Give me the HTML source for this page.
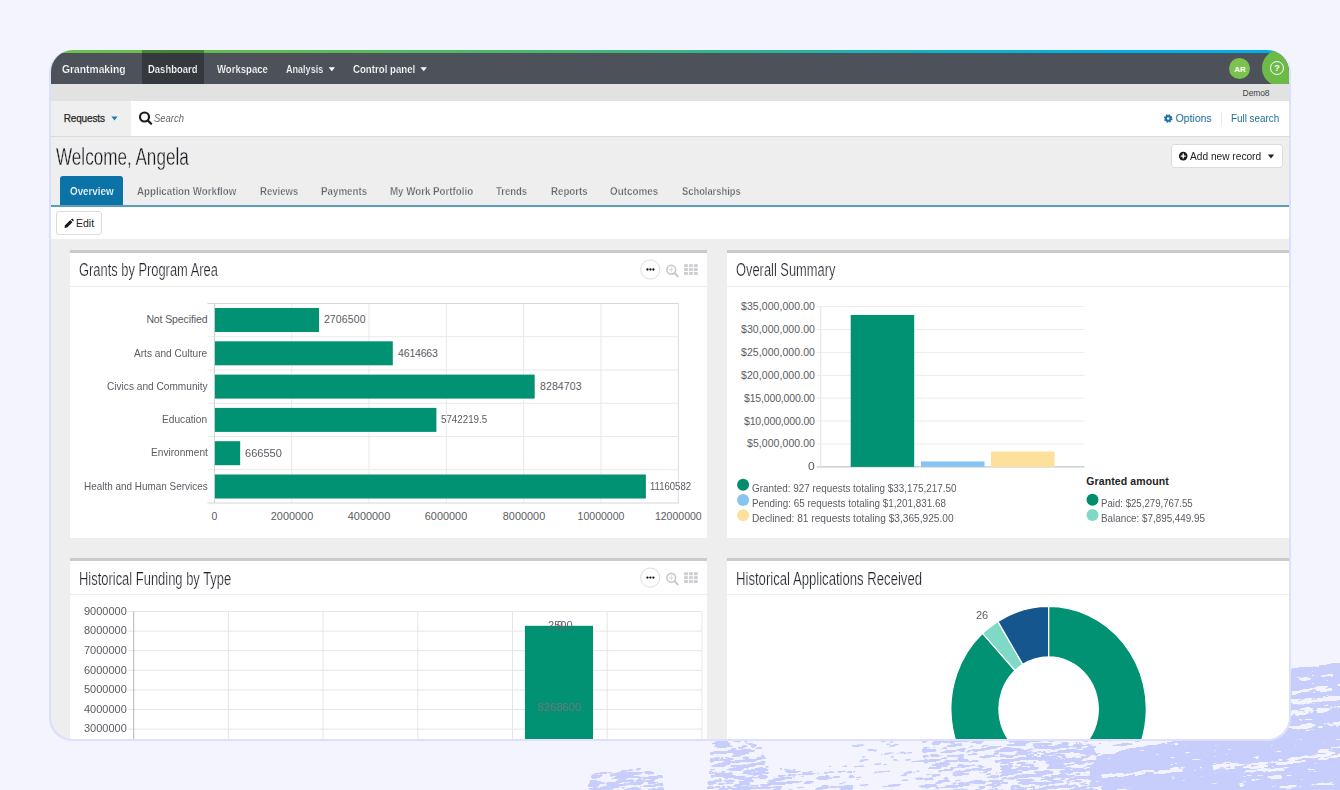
<!DOCTYPE html>
<html lang="en">
<head>
<meta charset="utf-8">
<title>Grantmaking Dashboard</title>
<style>
*{box-sizing:border-box;margin:0;padding:0}
html,body{width:1340px;height:790px;overflow:hidden}
body{background:#f4f4fe;font-family:"Liberation Sans",sans-serif;position:relative;color:#333}
.abs{position:absolute}
.t{position:absolute;white-space:nowrap;line-height:1;transform-origin:0 50%}
#brush{position:absolute;left:0;top:0;width:1340px;height:790px}
#frame{position:absolute;left:49.4px;top:49.5px;width:1241.4px;height:691.1px;border-radius:23px;background:#dde0fc}
#app{position:absolute;left:1.6px;top:0.5px;width:1238px;height:689.2px;border-radius:22px;overflow:hidden;background:#eeeeee}
#topbar{left:0;top:0;width:1239px;height:3.4px;background:linear-gradient(90deg,#6cc24a 0%,#62bd4e 14%,#4eb862 32%,#38b585 52%,#0bb1cf 74%,#00b1e8 86%,#00aee6 100%)}
#nav{left:0;top:3.4px;width:1239px;height:30.8px;background:#4d525a}
#navact{left:91px;top:0;width:62px;height:34.2px;background:rgba(0,0,0,.3)}
#navr{left:1100px;top:0;width:139px;height:34.8px;overflow:hidden}
.caret{position:absolute;width:0;height:0;border-left:3.2px solid transparent;border-right:3.2px solid transparent;border-top:3.8px solid #fff}
#band{left:0;top:34.2px;width:1239px;height:16.8px;background:#e2e2e3}
#srow{left:0;top:51px;width:1239px;height:35.6px;background:#fff;border-bottom:1px solid #dadada}
#sleft{left:0;top:51px;width:79.7px;height:34.6px;background:#efefef}
#tabov{left:9px;top:126.2px;width:63.5px;height:29.4px;background:#0b73a5;border-radius:3px 3px 0 0}
#tabline{left:0;top:155.4px;width:1239px;height:2px;background:#5c9dbb}
#editrow{left:0;top:157.4px;width:1239px;height:31.8px;background:#fff}
.btn{position:absolute;background:#fff;border:1px solid #dcdcdc;border-radius:3px}
.card{position:absolute;background:#fff;border-top:3px solid #c9c9ce}
.card .hd{position:absolute;left:0;top:0;right:0;height:33.6px;border-bottom:1px solid #ececec}
#gfx{position:absolute;left:0;top:0;width:1239px;height:690px}
</style>
</head>
<body>
<svg id="brush" viewBox="0 0 1340 790">
<defs>
<filter id="dryL" filterUnits="userSpaceOnUse" x="520" y="560" width="900" height="320" color-interpolation-filters="sRGB">
<feTurbulence type="fractalNoise" baseFrequency="0.06 0.4" numOctaves="4" seed="11" result="t"/>
<feColorMatrix in="t" type="matrix" values="0 0 0 0 0 0 0 0 0 0 0 0 0 0 0 2.4 0 0 0 -0.7" result="na"/>
<feComposite in="na" in2="SourceGraphic" operator="arithmetic" k1="0" k2="1" k3="1" k4="-1" result="s"/>
<feColorMatrix in="s" type="matrix" values="0 0 0 0 0.784 0 0 0 0 0.808 0 0 0 0 0.988 0 0 0 30 0"/>
</filter>
<filter id="dryB" filterUnits="userSpaceOnUse" x="520" y="560" width="900" height="320" color-interpolation-filters="sRGB">
<feTurbulence type="fractalNoise" baseFrequency="0.06 0.4" numOctaves="4" seed="5" result="t"/>
<feColorMatrix in="t" type="matrix" values="0 0 0 0 0 0 0 0 0 0 0 0 0 0 0 2.4 0 0 0 -0.7" result="na"/>
<feComposite in="na" in2="SourceGraphic" operator="arithmetic" k1="0" k2="1" k3="1" k4="-1" result="s"/>
<feColorMatrix in="s" type="matrix" values="0 0 0 0 0.957 0 0 0 0 0.957 0 0 0 0 0.996 0 0 0 30 0"/>
</filter>
</defs>
<g filter="url(#dryL)" transform="rotate(-4 1000 760)">
<path d="M584.6 766.0L592.0 745.5L640.3 742.9L661.7 752.4L662.4 771.5Z" fill="#000" fill-opacity="0.52"/>
<path d="M705.3 774.5L714.0 722.0L744.1 721.1L763.4 731.4L768.1 749.8L789.8 755.3L790.8 769.4L768.1 778.9Z" fill="#000" fill-opacity="0.43"/>
<path d="M785.1 780.1L789.8 755.3L850.1 753.5L853.9 784.9Z" fill="#000" fill-opacity="0.22"/>
<path d="M847.9 784.5L853.6 731.7L931.6 735.2L927.7 790.0Z" fill="#000" fill-opacity="0.06"/>
<path d="M923.7 789.8L923.6 734.6L1001.5 738.1L997.6 794.9Z" fill="#000" fill-opacity="0.36"/>
<path d="M997.6 794.9L1001.5 738.1L1086.3 744.0L1099.0 763.9L1093.3 801.6Z" fill="#000" fill-opacity="0.5"/>
<path d="M1086.3 744.0L1151.2 748.5L1099.0 763.9Z" fill="#000" fill-opacity="0.15"/>
<path d="M1089.1 776.3L1098.5 784.9L1177.1 807.5L1087.3 801.2Z" fill="#000" fill-opacity="0.65"/>
<path d="M1350.9 687.3L1296.6 689.5L1186.9 753.0L1140.6 756.8L1097.0 763.8L1089.1 776.3L1098.4 786.9L1147.2 805.4L1341.7 819.0Z" fill="#000" fill-opacity="0.985"/>
</g>
<g filter="url(#dryB)" transform="rotate(-4 1000 760)">
<path d="M1102.6 783.2L1148.8 782.4L1199.0 781.9" fill="none" stroke="#000" stroke-opacity="0.5" stroke-width="4" stroke-linecap="round"/>
<path d="M1214.0 782.0L1261.0 783.3L1289.2 781.2L1344.6 778.1" fill="none" stroke="#000" stroke-opacity="0.6" stroke-width="5" stroke-linecap="round"/>
<path d="M1241.5 789.9L1288.7 788.2" fill="none" stroke="#000" stroke-opacity="0.5" stroke-width="3.5" stroke-linecap="round"/>
<path d="M1244.0 797.1L1278.1 796.5" fill="none" stroke="#000" stroke-opacity="0.45" stroke-width="3" stroke-linecap="round"/>
<path d="M1319.8 774.3L1344.9 773.1" fill="none" stroke="#000" stroke-opacity="0.5" stroke-width="3" stroke-linecap="round"/>
<path d="M1277.4 807.5L1342.6 807.0" fill="none" stroke="#000" stroke-opacity="0.4" stroke-width="3" stroke-linecap="round"/>
<path d="M1298.0 713.7L1349.3 710.2" fill="none" stroke="#000" stroke-opacity="0.55" stroke-width="4.5" stroke-linecap="round"/>
<path d="M1297.3 722.6L1348.6 721.2" fill="none" stroke="#000" stroke-opacity="0.75" stroke-width="4.5" stroke-linecap="round"/>
<path d="M1294.6 733.5L1312.7 732.7" fill="none" stroke="#000" stroke-opacity="0.6" stroke-width="6" stroke-linecap="round"/>
<path d="M1320.6 733.3L1347.9 731.2" fill="none" stroke="#000" stroke-opacity="0.5" stroke-width="3" stroke-linecap="round"/>
<path d="M1287.5 749.0L1311.6 747.7L1346.7 747.2" fill="none" stroke="#000" stroke-opacity="0.6" stroke-width="4" stroke-linecap="round"/>
<path d="M1304.9 700.1L1337.1 699.4" fill="none" stroke="#000" stroke-opacity="0.4" stroke-width="2.5" stroke-linecap="round"/>
</g>
</svg>
<div id="frame"><div id="app">
<div class="abs" id="topbar"></div>
<div class="abs" id="nav"></div>
<div class="abs" id="navact"></div>

<div class="abs" id="navr">
<div class="abs" style="left:78.0px;top:8.099999999999994px;width:21.4px;height:21.4px;border-radius:50%;background:#7bc24f"></div>
<div class="abs" style="left:111.5px;top:-0.5px;width:36px;height:36px;border-radius:50%;background:#6dbb46"></div>
<div class="abs" style="left:118.79999999999995px;top:10.700000000000003px;width:14.4px;height:14.4px;border-radius:50%;border:1.7px solid #fff"></div>
</div>
<div class="abs" id="band"></div>
<div class="abs" id="srow"></div>
<div class="abs" id="sleft"></div>

<div class="abs" style="left:1169.7px;top:62.2px;width:1px;height:12.5px;background:#e7e7e7"></div>
<div class="btn" style="left:1120px;top:94px;width:112px;height:24px"></div>

<div class="abs" id="tabov"></div>
<div class="abs" id="tabline"></div>
<div class="abs" id="editrow"></div>
<div class="btn" style="left:5.299999999999997px;top:161.3px;width:45.3px;height:23.3px"></div>
<div class="card" style="left:19px;top:200.4px;width:637.2px;height:287.6px"><div class="hd"></div></div>
<div class="card" style="left:676px;top:200.4px;width:564px;height:287.6px"><div class="hd"></div></div>
<div class="card" style="left:19px;top:508.4px;width:637.2px;height:200px"><div class="hd"></div></div>
<div class="card" style="left:676px;top:508.4px;width:564px;height:200px"><div class="hd"></div></div>
<svg id="gfx" viewBox="0 0 1239 690">
<line x1="240.72" y1="253.5" x2="240.72" y2="453" stroke="#e9e9e9" stroke-width="1"/>
<line x1="318.04" y1="253.5" x2="318.04" y2="453" stroke="#e9e9e9" stroke-width="1"/>
<line x1="395.36" y1="253.5" x2="395.36" y2="453" stroke="#e9e9e9" stroke-width="1"/>
<line x1="472.68" y1="253.5" x2="472.68" y2="453" stroke="#e9e9e9" stroke-width="1"/>
<line x1="550" y1="253.5" x2="550" y2="453" stroke="#e9e9e9" stroke-width="1"/>
<line x1="627.32" y1="253.5" x2="627.32" y2="453" stroke="#dcdcdc" stroke-width="1"/>
<line x1="156.4" y1="253.5" x2="627.32" y2="253.5" stroke="#d6d6d6" stroke-width="1"/>
<line x1="156.4" y1="286.75" x2="627.32" y2="286.75" stroke="#e9e9e9" stroke-width="1"/>
<line x1="156.4" y1="320" x2="627.32" y2="320" stroke="#e9e9e9" stroke-width="1"/>
<line x1="156.4" y1="353.25" x2="627.32" y2="353.25" stroke="#e9e9e9" stroke-width="1"/>
<line x1="156.4" y1="386.5" x2="627.32" y2="386.5" stroke="#e9e9e9" stroke-width="1"/>
<line x1="156.4" y1="419.75" x2="627.32" y2="419.75" stroke="#e9e9e9" stroke-width="1"/>
<line x1="156.4" y1="453" x2="627.32" y2="453" stroke="#d6d6d6" stroke-width="1"/>
<line x1="163.4" y1="253.5" x2="163.4" y2="453" stroke="#d0d0d0" stroke-width="1"/>
<rect x="163.9" y="258" width="104.13" height="24" fill="#009272"/>
<rect x="163.9" y="291.3" width="177.9" height="24" fill="#009272"/>
<rect x="163.9" y="324.6" width="319.79" height="24" fill="#009272"/>
<rect x="163.9" y="357.9" width="221.49" height="24" fill="#009272"/>
<rect x="163.9" y="391.2" width="25.27" height="24" fill="#009272"/>
<rect x="163.9" y="424.5" width="430.97" height="24" fill="#009272"/>
<line x1="765.8" y1="256.6" x2="1033.5" y2="256.6" stroke="#ececec" stroke-width="1"/>
<line x1="765.8" y1="279.5" x2="1033.5" y2="279.5" stroke="#ececec" stroke-width="1"/>
<line x1="765.8" y1="302.4" x2="1033.5" y2="302.4" stroke="#ececec" stroke-width="1"/>
<line x1="765.8" y1="325.3" x2="1033.5" y2="325.3" stroke="#ececec" stroke-width="1"/>
<line x1="765.8" y1="348.2" x2="1033.5" y2="348.2" stroke="#ececec" stroke-width="1"/>
<line x1="765.8" y1="371.1" x2="1033.5" y2="371.1" stroke="#ececec" stroke-width="1"/>
<line x1="765.8" y1="394" x2="1033.5" y2="394" stroke="#ececec" stroke-width="1"/>
<line x1="765.8" y1="416.9" x2="1033.5" y2="416.9" stroke="#b9b9b9" stroke-width="1"/>
<line x1="769.8" y1="256.6" x2="769.8" y2="416.9" stroke="#e2e2e2" stroke-width="1"/>
<rect x="799.7" y="264.96" width="63.5" height="151.94" fill="#009272"/>
<rect x="870" y="411.4" width="63.5" height="5.5" fill="#86c5f1"/>
<rect x="940" y="401.48" width="63.5" height="15.42" fill="#fde09b"/>
<circle cx="692.1" cy="434.8" r="6" fill="#008d6e"/>
<circle cx="692.1" cy="450" r="6" fill="#86c5f1"/>
<circle cx="692.1" cy="465.3" r="6" fill="#fde09b"/>
<circle cx="1041.5" cy="449.8" r="6" fill="#008d6e"/>
<circle cx="1041.5" cy="465" r="6" fill="#7fd9c6"/>
<line x1="177.4" y1="561.5" x2="177.4" y2="695" stroke="#e6e6e6" stroke-width="1"/>
<line x1="272.1" y1="561.5" x2="272.1" y2="695" stroke="#e6e6e6" stroke-width="1"/>
<line x1="366.8" y1="561.5" x2="366.8" y2="695" stroke="#e6e6e6" stroke-width="1"/>
<line x1="461.5" y1="561.5" x2="461.5" y2="695" stroke="#e6e6e6" stroke-width="1"/>
<line x1="556.2" y1="561.5" x2="556.2" y2="695" stroke="#e6e6e6" stroke-width="1"/>
<line x1="650.9" y1="561.5" x2="650.9" y2="695" stroke="#e6e6e6" stroke-width="1"/>
<line x1="76.7" y1="561.5" x2="650.9" y2="561.5" stroke="#e6e6e6" stroke-width="1"/>
<line x1="76.7" y1="581.1" x2="650.9" y2="581.1" stroke="#e6e6e6" stroke-width="1"/>
<line x1="76.7" y1="600.7" x2="650.9" y2="600.7" stroke="#e6e6e6" stroke-width="1"/>
<line x1="76.7" y1="620.3" x2="650.9" y2="620.3" stroke="#e6e6e6" stroke-width="1"/>
<line x1="76.7" y1="639.9" x2="650.9" y2="639.9" stroke="#e6e6e6" stroke-width="1"/>
<line x1="76.7" y1="659.5" x2="650.9" y2="659.5" stroke="#e6e6e6" stroke-width="1"/>
<line x1="76.7" y1="679.1" x2="650.9" y2="679.1" stroke="#e6e6e6" stroke-width="1"/>
<line x1="76.7" y1="698.7" x2="650.9" y2="698.7" stroke="#e6e6e6" stroke-width="1"/>
<line x1="82.7" y1="561.5" x2="82.7" y2="695" stroke="#b5b5b5" stroke-width="1"/>
<rect x="473.9" y="575.8" width="68.1" height="130" fill="#009272"/>
<g transform="translate(997.6 659) scale(1 1.05)">
<path d="M0 -97.7A97.7 97.7 0 1 1 -33.42 91.81L-17 46.7A49.7 49.7 0 1 0 0 -49.7Z" fill="#009272" stroke="#fff" stroke-width="1.2" stroke-linejoin="round"/>
<path d="M-33.42 91.81A97.7 97.7 0 0 1 -66.01 -72.03L-33.58 -36.64A49.7 49.7 0 0 0 -17 46.7Z" fill="#009272" stroke="#fff" stroke-width="1.2" stroke-linejoin="round"/>
<path d="M-66.01 -72.03A97.7 97.7 0 0 1 -50.76 -83.48L-25.82 -42.47A49.7 49.7 0 0 0 -33.58 -36.64Z" fill="#7fd9c6" stroke="#fff" stroke-width="1.2" stroke-linejoin="round"/>
<path d="M-50.76 -83.48A97.7 97.7 0 0 1 -0 -97.7L-0 -49.7A49.7 49.7 0 0 0 -25.82 -42.47Z" fill="#15568f" stroke="#fff" stroke-width="1.2" stroke-linejoin="round"/>
</g>
<circle cx="599.2" cy="219.5" r="9.6" fill="#fff" stroke="#dddddf" stroke-width="1"/>
<circle cx="596.4" cy="219.5" r="1.15" fill="#111"/>
<circle cx="599.4" cy="219.5" r="1.15" fill="#111"/>
<circle cx="602.4" cy="219.5" r="1.15" fill="#111"/>
<circle cx="620.3" cy="219.7" r="4.4" fill="none" stroke="#c6c9ce" stroke-width="1.6"/>
<path d="M623.7 223.1L626.7 226.3" stroke="#c6c9ce" stroke-width="2.1" stroke-linecap="round"/>
<path d="M617.9 219.7h4.8M620.3 217.3v4.8" stroke="#cfd6dd" stroke-width="0.9"/>
<rect x="633.1" y="214.2" width="3.8" height="2.9" fill="#cbced2"/>
<rect x="633.1" y="218.1" width="3.8" height="2.9" fill="#cbced2"/>
<rect x="633.1" y="222" width="3.8" height="2.9" fill="#cbced2"/>
<rect x="638" y="214.2" width="3.8" height="2.9" fill="#cbced2"/>
<rect x="638" y="218.1" width="3.8" height="2.9" fill="#cbced2"/>
<rect x="638" y="222" width="3.8" height="2.9" fill="#cbced2"/>
<rect x="642.9" y="214.2" width="3.8" height="2.9" fill="#cbced2"/>
<rect x="642.9" y="218.1" width="3.8" height="2.9" fill="#cbced2"/>
<rect x="642.9" y="222" width="3.8" height="2.9" fill="#cbced2"/>
<circle cx="599.2" cy="527.6" r="9.6" fill="#fff" stroke="#dddddf" stroke-width="1"/>
<circle cx="596.4" cy="527.6" r="1.15" fill="#111"/>
<circle cx="599.4" cy="527.6" r="1.15" fill="#111"/>
<circle cx="602.4" cy="527.6" r="1.15" fill="#111"/>
<circle cx="620.3" cy="527.8" r="4.4" fill="none" stroke="#c6c9ce" stroke-width="1.6"/>
<path d="M623.7 531.2L626.7 534.4" stroke="#c6c9ce" stroke-width="2.1" stroke-linecap="round"/>
<path d="M617.9 527.8h4.8M620.3 525.4v4.8" stroke="#cfd6dd" stroke-width="0.9"/>
<rect x="633.1" y="522.3" width="3.8" height="2.9" fill="#cbced2"/>
<rect x="633.1" y="526.2" width="3.8" height="2.9" fill="#cbced2"/>
<rect x="633.1" y="530.1" width="3.8" height="2.9" fill="#cbced2"/>
<rect x="638" y="522.3" width="3.8" height="2.9" fill="#cbced2"/>
<rect x="638" y="526.2" width="3.8" height="2.9" fill="#cbced2"/>
<rect x="638" y="530.1" width="3.8" height="2.9" fill="#cbced2"/>
<rect x="642.9" y="522.3" width="3.8" height="2.9" fill="#cbced2"/>
<rect x="642.9" y="526.2" width="3.8" height="2.9" fill="#cbced2"/>
<rect x="642.9" y="530.1" width="3.8" height="2.9" fill="#cbced2"/>
<circle cx="93.5" cy="67" r="4.5" fill="none" stroke="#1a1a1a" stroke-width="2.1"/>
<path d="M96.9 70.6L100.2 73.7" stroke="#1a1a1a" stroke-width="2.2" stroke-linecap="round"/>
<circle cx="1117.2" cy="68.5" r="3.3" fill="none" stroke="#1c6f99" stroke-width="2" stroke-dasharray="1.5 1.092"/>
<circle cx="1117.2" cy="68.5" r="2.25" fill="none" stroke="#1c6f99" stroke-width="1.9"/>
<circle cx="1132.2" cy="106.1" r="4.3" fill="#1a1a1a"/>
<path d="M1129.7 106.1h5M1132.2 103.6v5" stroke="#fff" stroke-width="1.4"/>
<g transform="translate(13.5 169)"><path d="M0 9L0.6 6.3L5.8 1.1L7.9 3.2L2.7 8.4Z" fill="#1a1a1a"/><path d="M6.5 0.4L7.3 -0.3Q7.8 -0.6 8.3 -0.1L9.1 0.7Q9.5 1.2 9.1 1.7L8.6 2.5Z" fill="#1a1a1a"/></g>
<path d="M277.6 17.3h6.4l-3.2 4Z" fill="#fff"/>
<path d="M369.5 17.3h6.4l-3.2 4Z" fill="#fff"/>
<path d="M60.4 66.6h6.2l-3.1 4Z" fill="#1b7fb5"/>
<path d="M1216.8 104.6h6.4l-3.2 4Z" fill="#222"/>
</svg>
<div class="t" style="font-size:11.3px;top:14.00px;color:#fff;font-weight:bold;left:11.48px;transform:scaleX(0.9118);-webkit-text-stroke:0.22px #4d525a">Grantmaking</div>
<div class="t" style="font-size:11.3px;top:14.00px;color:#fff;font-weight:bold;left:97.08px;transform:scaleX(0.8395);-webkit-text-stroke:0.22px #36393f">Dashboard</div>
<div class="t" style="font-size:11.3px;top:14.00px;color:#fff;font-weight:bold;left:165.58px;transform:scaleX(0.8463);-webkit-text-stroke:0.22px #4d525a">Workspace</div>
<div class="t" style="font-size:11.3px;top:14.00px;color:#fff;font-weight:bold;left:235.18px;transform:scaleX(0.8015);-webkit-text-stroke:0.22px #4d525a">Analysis</div>
<div class="t" style="font-size:11.3px;top:14.00px;color:#fff;font-weight:bold;left:302.28px;transform:scaleX(0.8548);-webkit-text-stroke:0.22px #4d525a">Control panel</div>
<div class="t" style="font-size:7.6px;top:16.00px;color:#fff;font-weight:bold;left:1188.70px;transform-origin:50% 50%;transform:translateX(-50%) scaleX(1.0426)">AR</div>
<div class="t" style="font-size:9px;top:14.00px;color:#fff;font-weight:bold;left:1226.00px;transform:translateX(-50%)">?</div>
<div class="t" style="font-size:8.5px;top:39.00px;color:#444;letter-spacing:-0.118px;left:1191.63px">Demo8</div>
<div class="t" style="font-size:10px;top:64.00px;color:#2b2b2b;-webkit-text-stroke:0.25px currentColor;letter-spacing:-0.121px;left:12.65px">Requests</div>
<div class="t" style="font-size:10px;top:64.00px;color:#686868;font-style:italic;left:103.45px;transform:scaleX(0.9436)">Search</div>
<div class="t" style="font-size:10.5px;top:63.00px;color:#1c6f99;letter-spacing:-0.005px;left:1124.42px">Options</div>
<div class="t" style="font-size:10.5px;top:63.00px;color:#1c6f99;left:1180.42px;transform:scaleX(0.9376)">Full search</div>
<div class="t" style="font-size:23px;top:96.00px;color:#191c22;left:5.40px;transform:scaleX(0.7431);-webkit-text-stroke:0.32px #eee">Welcome, Angela</div>
<div class="t" style="font-size:10.5px;top:101.00px;color:#222;left:1139.42px;transform:scaleX(0.9675)">Add new record</div>
<div class="t" style="font-size:10.5px;top:136.00px;color:#fff;font-weight:bold;left:18.92px;transform:scaleX(0.9347);-webkit-text-stroke:0.2px #0b73a5">Overview</div>
<div class="t" style="font-size:10.5px;top:136.00px;color:#5e6369;font-weight:bold;left:86.42px;transform:scaleX(0.9273);-webkit-text-stroke:0.25px #eee">Application Workflow</div>
<div class="t" style="font-size:10.5px;top:136.00px;color:#5e6369;font-weight:bold;left:208.82px;transform:scaleX(0.9102);-webkit-text-stroke:0.25px #eee">Reviews</div>
<div class="t" style="font-size:10.5px;top:136.00px;color:#5e6369;font-weight:bold;left:269.92px;transform:scaleX(0.9304);-webkit-text-stroke:0.25px #eee">Payments</div>
<div class="t" style="font-size:10.5px;top:136.00px;color:#5e6369;font-weight:bold;left:338.92px;transform:scaleX(0.9276);-webkit-text-stroke:0.25px #eee">My Work Portfolio</div>
<div class="t" style="font-size:10.5px;top:136.00px;color:#5e6369;font-weight:bold;left:445.42px;transform:scaleX(0.9047);-webkit-text-stroke:0.25px #eee">Trends</div>
<div class="t" style="font-size:10.5px;top:136.00px;color:#5e6369;font-weight:bold;left:499.92px;transform:scaleX(0.9236);-webkit-text-stroke:0.25px #eee">Reports</div>
<div class="t" style="font-size:10.5px;top:136.00px;color:#5e6369;font-weight:bold;left:559.42px;transform:scaleX(0.9376);-webkit-text-stroke:0.25px #eee">Outcomes</div>
<div class="t" style="font-size:10.5px;top:136.00px;color:#5e6369;font-weight:bold;left:630.92px;transform:scaleX(0.8893);-webkit-text-stroke:0.25px #eee">Scholarships</div>
<div class="t" style="font-size:10.5px;top:168.00px;color:#222;letter-spacing:0.020px;left:24.92px">Edit</div>
<div class="t" style="font-size:18px;top:211.00px;color:#1f232b;left:28.30px;transform:scaleX(0.7156);-webkit-text-stroke:0.24px #fff">Grants by Program Area</div>
<div class="t" style="font-size:18px;top:211.00px;color:#1f232b;left:685.30px;transform:scaleX(0.7149);-webkit-text-stroke:0.24px #fff">Overall Summary</div>
<div class="t" style="font-size:18px;top:520.00px;color:#1f232b;left:28.50px;transform:scaleX(0.7187);-webkit-text-stroke:0.24px #fff">Historical Funding by Type</div>
<div class="t" style="font-size:18px;top:520.00px;color:#1f232b;left:685.30px;transform:scaleX(0.7291);-webkit-text-stroke:0.24px #fff">Historical Applications Received</div>
<div class="t" style="font-size:10.5px;top:264.00px;color:#5a5c62;letter-spacing:-0.108px;left:95.42px">Not Specified</div>
<div class="t" style="font-size:10.5px;top:298.00px;color:#5a5c62;left:83.42px;transform:scaleX(0.9642)">Arts and Culture</div>
<div class="t" style="font-size:10.5px;top:331.00px;color:#5a5c62;left:55.92px;transform:scaleX(0.9636)">Civics and Community</div>
<div class="t" style="font-size:10.5px;top:364.00px;color:#5a5c62;left:111.42px;transform:scaleX(0.9669)">Education</div>
<div class="t" style="font-size:10.5px;top:397.00px;color:#5a5c62;left:99.67px;transform:scaleX(0.9653)">Environment</div>
<div class="t" style="font-size:10.5px;top:431.00px;color:#5a5c62;left:32.92px;transform:scaleX(0.9458)">Health and Human Services</div>
<div class="t" style="font-size:10.5px;top:264.00px;color:#5a5c62;letter-spacing:0.127px;left:272.92px">2706500</div>
<div class="t" style="font-size:10.5px;top:298.00px;color:#5a5c62;letter-spacing:-0.189px;left:347.12px">4614663</div>
<div class="t" style="font-size:10.5px;top:331.00px;color:#5a5c62;letter-spacing:0.111px;left:489.02px">8284703</div>
<div class="t" style="font-size:10.5px;top:364.00px;color:#5a5c62;left:390.42px;transform:scaleX(0.9298)">5742219.5</div>
<div class="t" style="font-size:10.5px;top:398.00px;color:#5a5c62;left:193.92px;transform:scaleX(1.0530)">666550</div>
<div class="t" style="font-size:10.5px;top:431.00px;color:#5a5c62;left:598.92px;transform:scaleX(0.9089)">11160582</div>
<div class="t" style="font-size:10.5px;top:461.00px;color:#5a5c62;left:163.40px;transform:translateX(-50%)">0</div>
<div class="t" style="font-size:10.5px;top:461.00px;color:#5a5c62;left:240.72px;transform-origin:50% 50%;transform:translateX(-50%) scaleX(1.0370)">2000000</div>
<div class="t" style="font-size:10.5px;top:461.00px;color:#5a5c62;left:318.04px;transform-origin:50% 50%;transform:translateX(-50%) scaleX(1.0370)">4000000</div>
<div class="t" style="font-size:10.5px;top:461.00px;color:#5a5c62;left:395.36px;transform-origin:50% 50%;transform:translateX(-50%) scaleX(1.0370)">6000000</div>
<div class="t" style="font-size:10.5px;top:461.00px;color:#5a5c62;left:472.68px;transform-origin:50% 50%;transform:translateX(-50%) scaleX(1.0370)">8000000</div>
<div class="t" style="font-size:10.5px;top:461.00px;color:#5a5c62;letter-spacing:0.005px;left:550.00px;transform:translateX(-50%)">10000000</div>
<div class="t" style="font-size:10.5px;top:461.00px;color:#5a5c62;letter-spacing:0.005px;left:627.32px;transform:translateX(-50%)">12000000</div>
<div class="t" style="font-size:10.5px;top:251.00px;color:#5a5c62;letter-spacing:0.073px;left:690.02px">$35,000,000.00</div>
<div class="t" style="font-size:10.5px;top:274.00px;color:#5a5c62;letter-spacing:0.073px;left:690.02px">$30,000,000.00</div>
<div class="t" style="font-size:10.5px;top:297.00px;color:#5a5c62;letter-spacing:0.073px;left:690.02px">$25,000,000.00</div>
<div class="t" style="font-size:10.5px;top:320.00px;color:#5a5c62;letter-spacing:0.073px;left:690.02px">$20,000,000.00</div>
<div class="t" style="font-size:10.5px;top:343.00px;color:#5a5c62;letter-spacing:-0.157px;left:693.02px">$15,000,000.00</div>
<div class="t" style="font-size:10.5px;top:366.00px;color:#5a5c62;letter-spacing:-0.157px;left:693.02px">$10,000,000.00</div>
<div class="t" style="font-size:10.5px;top:388.00px;color:#5a5c62;letter-spacing:0.067px;left:696.02px">$5,000,000.00</div>
<div class="t" style="font-size:10.5px;top:411.00px;color:#5a5c62;left:757.22px;transform:scaleX(1.1559)">0</div>
<div class="t" style="font-size:10.5px;top:433.00px;color:#5a5c62;left:700.62px;transform:scaleX(0.9414)">Granted: 927 requests totaling $33,175,217.50</div>
<div class="t" style="font-size:10.5px;top:448.00px;color:#5a5c62;left:700.62px;transform:scaleX(0.9412)">Pending: 65 requests totaling $1,201,831.68</div>
<div class="t" style="font-size:10.5px;top:463.00px;color:#5a5c62;left:700.62px;transform:scaleX(0.9676)">Declined: 81 requests totaling $3,365,925.00</div>
<div class="t" style="font-size:10.5px;top:426.00px;color:#222;font-weight:bold;letter-spacing:0.120px;left:1035.22px">Granted amount</div>
<div class="t" style="font-size:10.5px;top:448.00px;color:#5a5c62;left:1049.92px;transform:scaleX(0.9180)">Paid: $25,279,767.55</div>
<div class="t" style="font-size:10.5px;top:463.00px;color:#5a5c62;left:1049.92px;transform:scaleX(0.9371)">Balance: $7,895,449.95</div>
<div class="t" style="font-size:10.5px;top:556.00px;color:#5a5c62;left:32.72px;transform:scaleX(1.0480)">9000000</div>
<div class="t" style="font-size:10.5px;top:575.00px;color:#5a5c62;left:32.72px;transform:scaleX(1.0480)">8000000</div>
<div class="t" style="font-size:10.5px;top:595.00px;color:#5a5c62;left:32.72px;transform:scaleX(1.0480)">7000000</div>
<div class="t" style="font-size:10.5px;top:615.00px;color:#5a5c62;left:32.72px;transform:scaleX(1.0480)">6000000</div>
<div class="t" style="font-size:10.5px;top:634.00px;color:#5a5c62;left:32.72px;transform:scaleX(1.0480)">5000000</div>
<div class="t" style="font-size:10.5px;top:654.00px;color:#5a5c62;left:32.72px;transform:scaleX(1.0480)">4000000</div>
<div class="t" style="font-size:10.5px;top:673.00px;color:#5a5c62;left:32.72px;transform:scaleX(1.0480)">3000000</div>
<div class="t" style="font-size:10.5px;top:570.00px;color:#62666e;left:496.52px;transform:scaleX(1.0555)">2500</div>
<div class="t" style="font-size:10.5px;top:570.00px;color:#62666e;left:508.90px;transform:translateX(-50%)">0</div>
<div class="t" style="font-size:10.5px;top:652.00px;color:#6a7a7b;left:508.40px;transform-origin:50% 50%;transform:translateX(-50%) scaleX(1.0676)">8268600</div>
<div class="t" style="font-size:10.5px;top:560.00px;color:#5a5c62;left:924.72px;transform:scaleX(1.0486)">26</div>
</div></div>
</body>
</html>
